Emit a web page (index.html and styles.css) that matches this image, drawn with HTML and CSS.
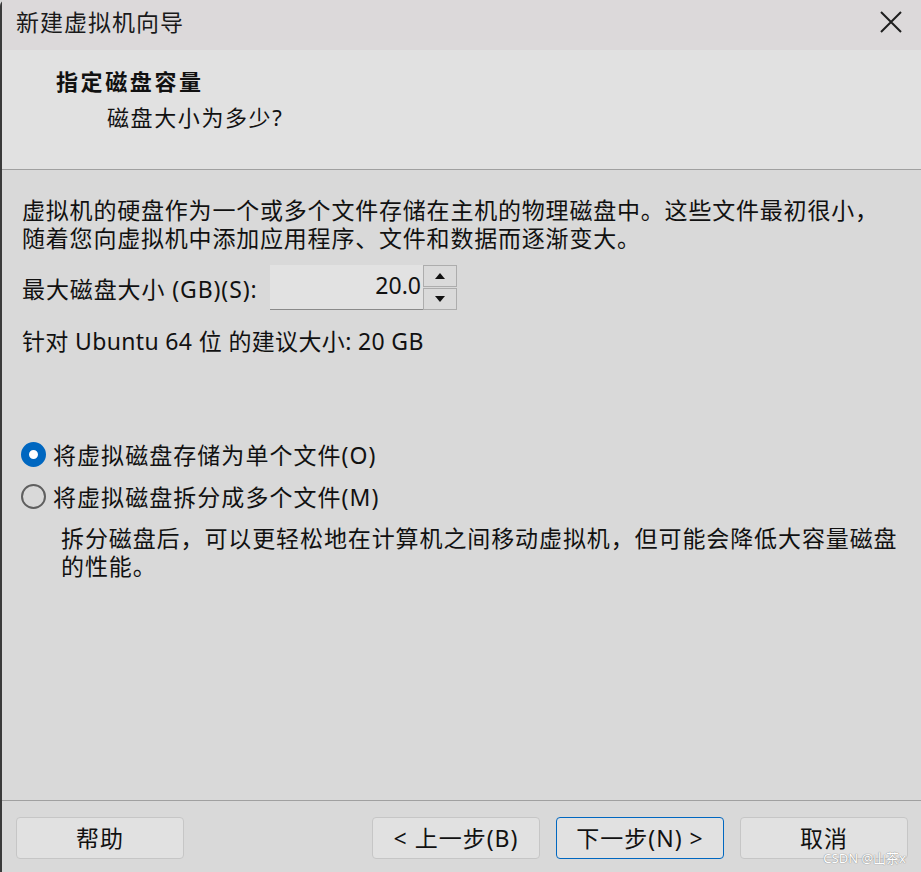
FILE: index.html
```html
<!DOCTYPE html>
<html lang="zh-CN">
<head>
<meta charset="utf-8">
<title>新建虚拟机向导</title>
<link rel="stylesheet" href="styles.css">
</head>
<body>
<div class="window">
  <div class="titlebar">
    <span class="title">新建虚拟机向导</span>
    <span class="close">
      <svg width="22" height="22" viewBox="0 0 22 22"><path d="M1 1 L21 21 M21 1 L1 21" stroke="#1e1e1e" stroke-width="2" fill="none"/></svg>
    </span>
  </div>
  <div class="header">
    <div class="h-title">指定磁盘容量</div>
    <div class="h-sub">磁盘大小为多少?</div>
  </div>
  <div class="content">
    <p class="para">虚拟机的硬盘作为一个或多个文件存储在主机的物理磁盘中。这些文件最初很小，<br>随着您向虚拟机中添加应用程序、文件和数据而逐渐变大。</p>
    <div class="size-row">
      <span class="label">最大磁盘大小 (GB)(S):</span>
      <div class="spin">
        <div class="spin-input">20.0</div>
        <div class="spin-btns">
          <div class="spin-btn"><svg width="10" height="6" viewBox="0 0 10 6"><path d="M5 0 L10 6 L0 6 Z" fill="#111"/></svg></div>
          <div class="spin-btn"><svg width="10" height="6" viewBox="0 0 10 6"><path d="M0 0 L10 0 L5 6 Z" fill="#111"/></svg></div>
        </div>
      </div>
    </div>
    <div class="recommend">针对 Ubuntu 64 位 的建议大小: 20 GB</div>
    <div class="radios">
      <div class="radio-row">
        <span class="radio checked"></span>
        <span class="radio-text">将虚拟磁盘存储为单个文件(O)</span>
      </div>
      <div class="radio-row second">
        <span class="radio"></span>
        <span class="radio-text">将虚拟磁盘拆分成多个文件(M)</span>
      </div>
      <p class="desc">拆分磁盘后，可以更轻松地在计算机之间移动虚拟机，但可能会降低大容量磁盘<br>的性能。</p>
    </div>
  </div>
  <div class="footer">
    <button class="btn">帮助</button>
    <div class="spacer"></div>
    <button class="btn">&lt; 上一步(B)</button>
    <button class="btn primary">下一步(N) &gt;</button>
    <button class="btn">取消</button>
  </div>
  <div class="watermark">CSDN @山茶x</div>
</div>
</body>
</html>
```

FILE: styles.css
```css
* { box-sizing: border-box; }
html, body {
  margin: 0;
  padding: 0;
}
body {
  width: 921px;
  height: 872px;
  background: #d9d9d9;
  font-family: "Noto Sans", "Noto Sans CJK SC", sans-serif;
  color: #111;
  overflow: hidden;
}
.window {
  position: relative;
  width: 921px;
  height: 872px;
  display: flex;
  flex-direction: column;
  border-left: 2px solid #3a3a3a;
  border-top-left-radius: 6px;
  background: #d9d9d9;
}
.titlebar {
  height: 50px;
  background: #dcd9da;
  display: flex;
  align-items: flex-start;
  justify-content: space-between;
  padding: 6px 19px 0 14px;
}
.title {
  font-size: 23px;
  line-height: 32px;
  color: #1a1a1a;
  letter-spacing: 1px;
}
.close {
  display: flex;
  margin-top: 5px;
}
.header {
  height: 120px;
  background: #e1e1e1;
  border-bottom: 1px solid #a0a0a0;
  padding: 15px 0 0 54px;
}
.h-title {
  font-size: 22px;
  font-weight: bold;
  line-height: 32px;
  letter-spacing: 2.6px;
}
.h-sub {
  font-size: 22px;
  line-height: 32px;
  margin-top: 4px;
  padding-left: 51px;
  letter-spacing: 1.6px;
}
.content {
  flex: 1;
  padding: 26px 0 0 20px;
  font-size: 23px;
  letter-spacing: 1px;
}
.para {
  margin: 0;
  line-height: 28px;
  letter-spacing: 0.8px;
  white-space: nowrap;
}
.size-row {
  display: flex;
  align-items: center;
  margin-top: 13px;
  height: 45px;
}
.label {
  width: 248px;
  letter-spacing: 0.9px;
  white-space: nowrap;
}
.spin {
  display: flex;
  height: 45px;
}
.spin-input {
  width: 153px;
  height: 45px;
  background: #e2e2e2;
  border-bottom: 1px solid #8a8a8a;
  text-align: right;
  padding-right: 2px;
  font-size: 23px;
  letter-spacing: 0;
  line-height: 40px;
}
.spin-btns {
  display: flex;
  flex-direction: column;
  width: 34px;
  height: 45px;
  gap: 1px;
}
.spin-btn {
  flex: 1;
  border: 1px solid #adadad;
  background: #dadada;
  display: flex;
  align-items: center;
  justify-content: center;
}
.recommend {
  margin-top: 17px;
  line-height: 28px;
  letter-spacing: 0.35px;
  white-space: nowrap;
}
.radios {
  margin-top: 85px;
}
.radio-row {
  display: flex;
  align-items: center;
  height: 28px;
}
.radio-row.second {
  margin-top: 14px;
}
.radio {
  width: 25px;
  height: 25px;
  border-radius: 50%;
  border: 2px solid #5f5f5f;
  margin-left: -1px;
  margin-right: 7px;
  flex: none;
}
.radio.checked {
  border: 8px solid #0067c0;
  background: #ffffff;
}
.radio-text {
  letter-spacing: 1.05px;
  white-space: nowrap;
}
.desc {
  margin: 14px 0 0 39px;
  line-height: 28px;
  letter-spacing: 0.9px;
  white-space: nowrap;
}
.footer {
  height: 72px;
  border-top: 1px solid #a0a0a0;
  display: flex;
  align-items: flex-start;
  padding: 16px 13px 0 14px;
  gap: 16px;
}
.spacer {
  flex: 1;
}
.btn {
  width: 168px;
  height: 42px;
  background: #e1e1e1;
  border: 1px solid #c6c6c6;
  border-radius: 4px;
  font-family: "Noto Sans", "Noto Sans CJK SC", sans-serif;
  font-size: 23px;
  line-height: 38px;
  color: #111;
  padding: 0;
  letter-spacing: 1px;
}
.btn.primary {
  border: 1px solid #0067c0;
}
.watermark {
  position: absolute;
  right: 15px;
  bottom: 5px;
  font-size: 13px;
  line-height: 18px;
  color: #ffffff;
  font-family: "Noto Sans", "Noto Sans CJK SC", sans-serif;
  text-shadow: 0 0 1px #8a8a8a, 0 0 1px #8a8a8a;
}
```
